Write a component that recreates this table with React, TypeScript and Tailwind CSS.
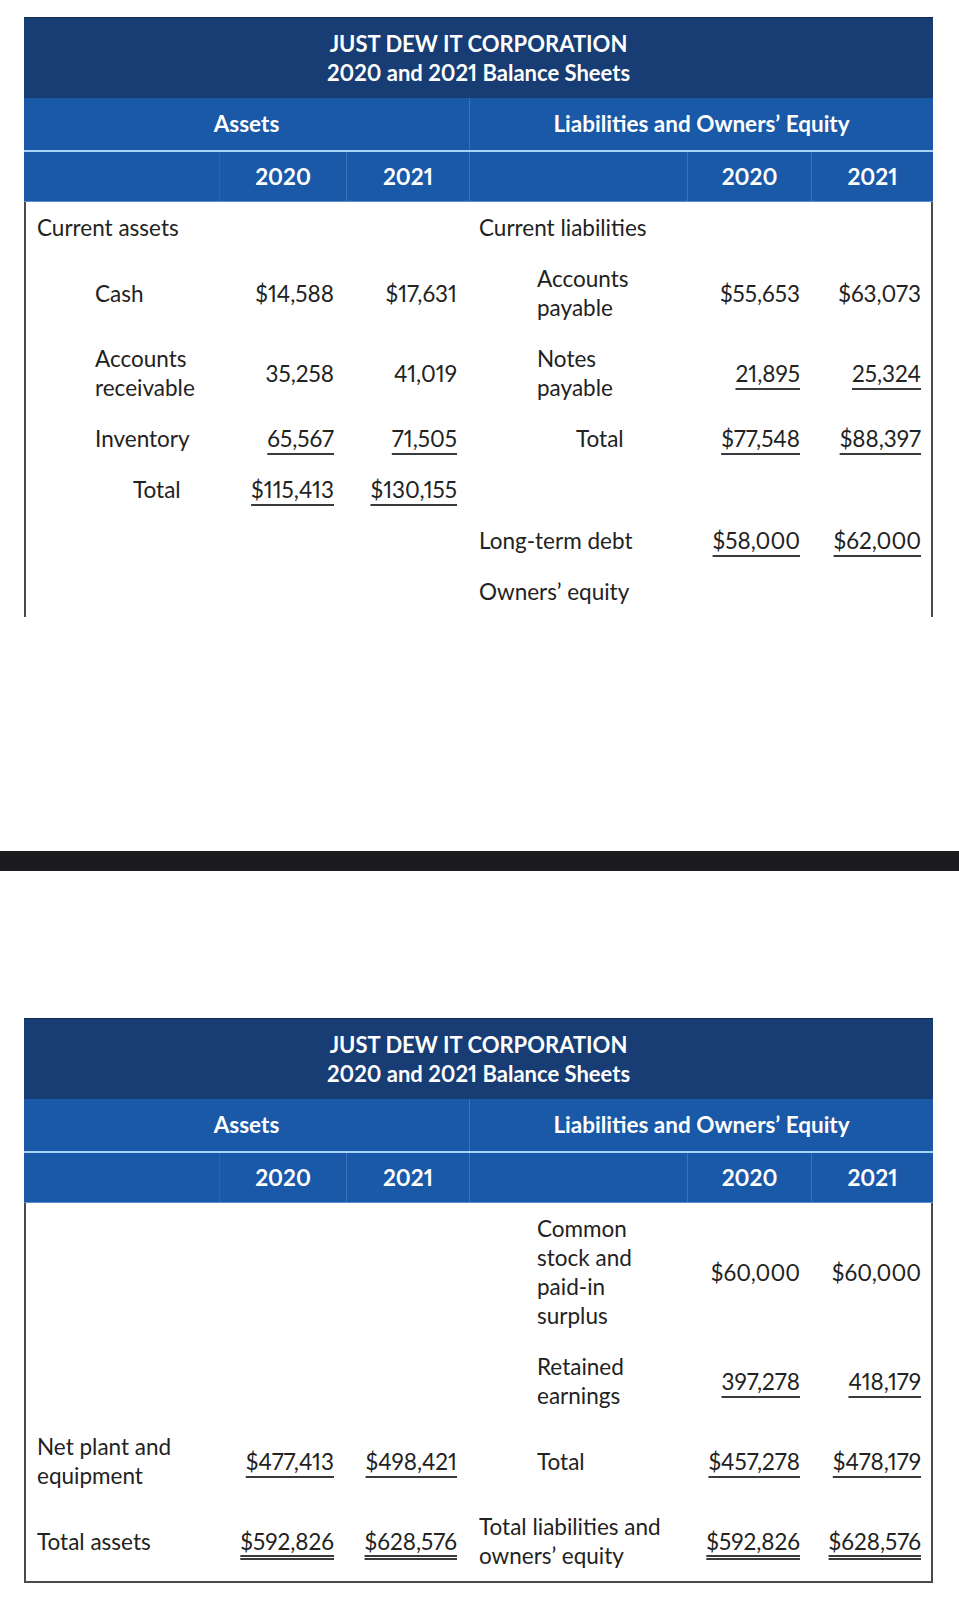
import React from "react";

type Cell = { text?: React.ReactNode; u?: "s" | "d" };
type Row = {
  l?: React.ReactNode;
  lInd?: 0 | 1 | 2;
  a?: Cell;
  b?: Cell;
  r?: React.ReactNode;
  rInd?: 0 | 1 | 2;
  c?: Cell;
  d?: Cell;
};

const leftPad = ["pl-[11px]", "pl-[69px]", "pl-[107px]"];
const rightPad = ["pl-[9px]", "pl-[67px]", "pl-[106px]"];

function Val({ cell, pr }: { cell?: Cell; pr: string }) {
  return (
    <div className={`flex items-center justify-end py-[11px] proportional-nums ${pr}`}>
      {cell?.text ? (
        cell.u === "s" ? (
          <span className="underline decoration-[1.5px] underline-offset-[6px] decoration-[#3a3a3a]">{cell.text}</span>
        ) : cell.u === "d" ? (
          <span className="underline decoration-double decoration-[1.5px] underline-offset-[5px] decoration-[#3a3a3a]">{cell.text}</span>
        ) : (
          <span>{cell.text}</span>
        )
      ) : null}
    </div>
  );
}

function Header() {
  return (
    <>
      <div className="h-[81px] bg-[#173d74] flex flex-col items-center justify-center text-white font-bold text-[22px] leading-[29px] border-t border-[#0f2a52] proportional-nums">
        <div>JUST DEW IT CORPORATION</div>
        <div>2020 and 2021 Balance Sheets</div>
      </div>
      <div className="grid grid-cols-[446px_463px] h-[54px] bg-[#1a58a8] border-b-2 border-[#a9d3f7] text-white font-bold text-[22.5px]">
        <div className="flex items-center justify-center border-r border-[#3a72bd]">Assets</div>
        <div className="flex items-center justify-center">Liabilities and Owners’ Equity</div>
      </div>
      <div className="grid grid-cols-[196px_127px_123px_218px_124px_121px] h-[50px] bg-[#1a58a8] border-b border-[#5d8fd0] text-white font-bold text-[22.5px] proportional-nums">
        <div className="border-r border-[#2a65b2]" />
        <div className="flex items-center justify-center border-r border-[#3a72bd]">2020</div>
        <div className="flex items-center justify-center border-r border-[#3a72bd]">2021</div>
        <div className="border-r border-[#3a72bd]" />
        <div className="flex items-center justify-center border-r border-[#3a72bd]">2020</div>
        <div className="flex items-center justify-center">2021</div>
      </div>
    </>
  );
}

function Body({ rows, bottom }: { rows: Row[]; bottom?: boolean }) {
  return (
    <div
      className={`grid grid-cols-[194px_127px_123px_218px_124px_119px] border-x-2 border-[#4a4a4a] bg-white text-[#222] text-[22.5px] leading-[29px] ${
        bottom ? "border-b-2" : ""
      }`}
    >
      {rows.map((r, i) => (
        <React.Fragment key={i}>
          <div className={`flex items-center py-[11px] ${leftPad[r.lInd ?? 0]}`}>
            <div>{r.l}</div>
          </div>
          <Val cell={r.a} pr="pr-[13px]" />
          <Val cell={r.b} pr="pr-[13px]" />
          <div className={`flex items-center py-[11px] ${rightPad[r.rInd ?? 0]}`}>
            <div>{r.r}</div>
          </div>
          <Val cell={r.c} pr="pr-[12px]" />
          <Val cell={r.d} pr="pr-[10px]" />
        </React.Fragment>
      ))}
    </div>
  );
}

const rows1: Row[] = [
  { l: "Current assets", r: "Current liabilities" },
  {
    l: "Cash",
    lInd: 1,
    a: { text: "$14,588" },
    b: { text: "$17,631" },
    r: (
      <>
        Accounts
        <br />
        payable
      </>
    ),
    rInd: 1,
    c: { text: "$55,653" },
    d: { text: "$63,073" },
  },
  {
    l: (
      <>
        Accounts
        <br />
        receivable
      </>
    ),
    lInd: 1,
    a: { text: "35,258" },
    b: { text: "41,019" },
    r: (
      <>
        Notes
        <br />
        payable
      </>
    ),
    rInd: 1,
    c: { text: "21,895", u: "s" },
    d: { text: "25,324", u: "s" },
  },
  {
    l: "Inventory",
    lInd: 1,
    a: { text: "65,567", u: "s" },
    b: { text: "71,505", u: "s" },
    r: "Total",
    rInd: 2,
    c: { text: "$77,548", u: "s" },
    d: { text: "$88,397", u: "s" },
  },
  {
    l: "Total",
    lInd: 2,
    a: { text: "$115,413", u: "s" },
    b: { text: "$130,155", u: "s" },
    r: "\u00a0",
  },
  {
    l: "\u00a0",
    r: "Long-term debt",
    c: { text: "$58,000", u: "s" },
    d: { text: "$62,000", u: "s" },
  },
  { l: "\u00a0", r: "Owners’ equity" },
];

const rows2: Row[] = [
  {
    l: "\u00a0",
    r: (
      <>
        Common
        <br />
        stock and
        <br />
        paid-in
        <br />
        surplus
      </>
    ),
    rInd: 1,
    c: { text: "$60,000" },
    d: { text: "$60,000" },
  },
  {
    l: "\u00a0",
    r: (
      <>
        Retained
        <br />
        earnings
      </>
    ),
    rInd: 1,
    c: { text: "397,278", u: "s" },
    d: { text: "418,179", u: "s" },
  },
  {
    l: (
      <>
        Net plant and
        <br />
        equipment
      </>
    ),
    a: { text: "$477,413", u: "s" },
    b: { text: "$498,421", u: "s" },
    r: "Total",
    rInd: 1,
    c: { text: "$457,278", u: "s" },
    d: { text: "$478,179", u: "s" },
  },
  {
    l: "Total assets",
    a: { text: "$592,826", u: "d" },
    b: { text: "$628,576", u: "d" },
    r: (
      <>
        Total liabilities and
        <br />
        owners’ equity
      </>
    ),
    c: { text: "$592,826", u: "d" },
    d: { text: "$628,576", u: "d" },
  },
];

export default function App() {
  return (
    <div className="w-[959px] h-[1612px] bg-white overflow-hidden" style={{ fontFamily: "Lato, 'Liberation Sans', sans-serif" }}>
      <div className="pt-[17px] pl-[24px]">
        <div className="w-[909px]">
          <Header />
          <Body rows={rows1} />
        </div>
      </div>
      <div className="mt-[234px] h-[20px] bg-[#1c1c1e]" />
      <div className="pt-[147px] pl-[24px]">
        <div className="w-[909px]">
          <Header />
          <Body rows={rows2} bottom />
        </div>
      </div>
    </div>
  );
}
